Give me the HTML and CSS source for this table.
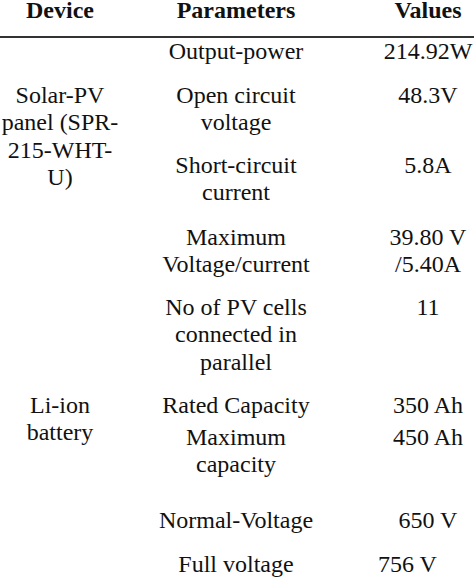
FILE: index.html
```html
<!DOCTYPE html>
<html>
<head>
<meta charset="utf-8">
<link rel="stylesheet" href="styles.css">
</head>
<body>
<div class="sheet">
  <div class="head">
    <div class="c1">Device</div>
    <div class="c2">Parameters</div>
    <div class="c3">Values</div>
  </div>
  <div class="body">
    <div class="c1 dev-pv">Solar-PV panel (SPR-215-WHT-U)</div>
    <div class="c2 r1">Output-power</div>
    <div class="c3 r1">214.92W</div>
    <div class="c2 r2">Open circuit voltage</div>
    <div class="c3 r2">48.3V</div>
    <div class="c2 r3">Short-circuit current</div>
    <div class="c3 r3">5.8A</div>
    <div class="c2 r4">Maximum Voltage/current</div>
    <div class="c3 r4">39.80 V /5.40A</div>
    <div class="c2 r5">No of PV cells connected in parallel</div>
    <div class="c3 r5">11</div>
    <div class="c1 dev-bat">Li-ion battery</div>
    <div class="c2 r6">Rated Capacity</div>
    <div class="c3 r6">350 Ah</div>
    <div class="c2 r7">Maximum capacity</div>
    <div class="c3 r7">450 Ah</div>
    <div class="c2 r8">Normal-Voltage</div>
    <div class="c3 r8">650 V</div>
    <div class="c2 r9">Full voltage</div>
    <div class="c3 r9 shift">756 V</div>
  </div>
</div>
</body>
</html>
```

FILE: styles.css
```css
html, body {
  margin: 0;
  padding: 0;
  background: #ffffff;
}
body {
  width: 474px;
  height: 577px;
  overflow: hidden;
}
.sheet {
  font-family: "Liberation Serif", "Times New Roman", serif;
  font-size: 24px;
  line-height: 27.6px;
  color: #111111;
}
.head, .body {
  display: grid;
  grid-template-columns: 151px 170px 153px;
}
.head {
  font-weight: bold;
  line-height: 20px;
  padding-bottom: 15.6px;
  border-bottom: 2px solid #333333;
}
.body {
  grid-template-rows: 44px 70px 72px 70px 98px 32px 83px 44px auto;
}
.c1 {
  grid-column: 1;
  text-align: center;
  padding: 0 27px 0 0;
  margin-left: -4px;
}
.c2 {
  grid-column: 2;
  text-align: center;
}
.c3 {
  grid-column: 3;
  text-align: center;
  padding-left: 61px;
}
.r1 { grid-row: 1; }
.r2 { grid-row: 2; }
.r3 { grid-row: 3; }
.r4 { grid-row: 4; }
.r5 { grid-row: 5; }
.r6 { grid-row: 6; }
.r7 { grid-row: 7; }
.r8 { grid-row: 8; }
.r9 { grid-row: 9; }
.dev-pv {
  grid-row: 2 / span 4;
}
.dev-bat {
  grid-row: 6 / span 3;
}
.shift {
  text-align: left;
  padding-left: 57px;
  white-space: nowrap;
}
```
